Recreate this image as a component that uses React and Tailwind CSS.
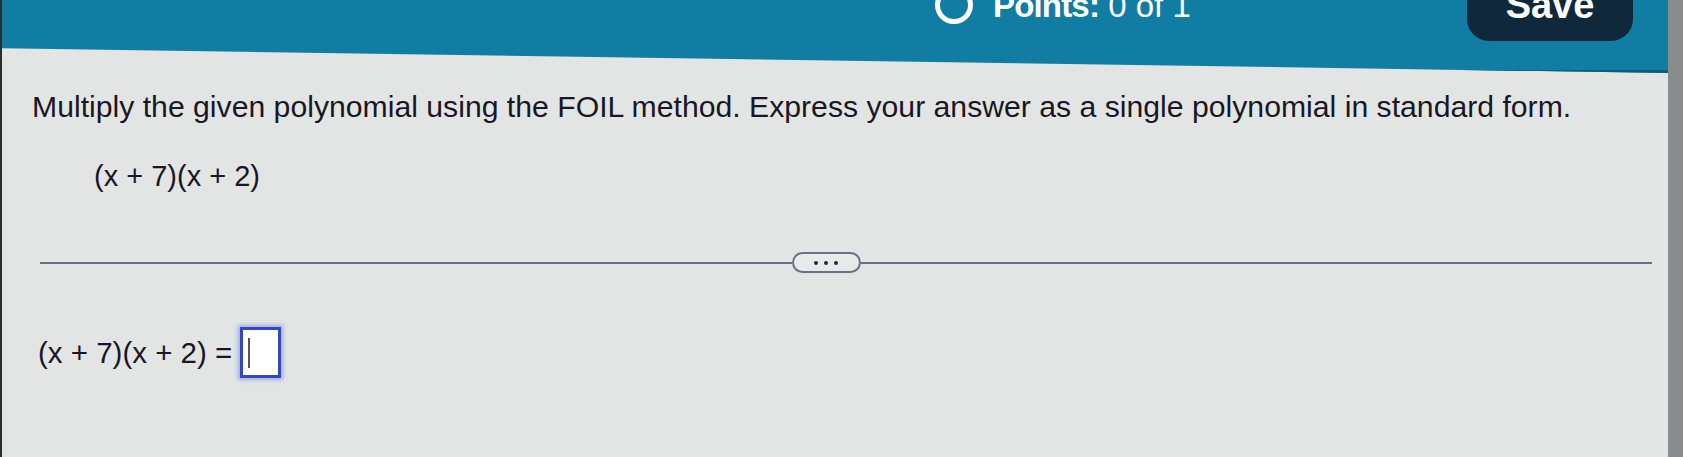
import React from "react";

export default function App() {
  const font = { fontFamily: '"Liberation Sans", Arial, sans-serif' };
  return (
    <div className="w-[1683px] h-[457px] overflow-hidden bg-[#3a3c3e] flex" style={font}>
      <div className="w-[2px] bg-[#2a2c2e]" />
      <div className="flex-1 flex flex-col bg-[#e3e5e4] relative">
        {/* header */}
        <div
          className="h-[73px] bg-[#127da3] border-b-[3px] border-[#0c5f7e] relative flex justify-end"
          style={{ clipPath: "polygon(0 0, 100% 0, 100% 100%, 0 66%)" }}
        >
          <div className="absolute left-[933px] top-[-14px] flex items-center gap-[20px] text-white text-[33px] leading-none">
            <div className="w-[38px] h-[38px] rounded-full border-[5px] border-white" />
            <div>
              <span className="font-bold tracking-tight">Points:</span> 0 of 1
            </div>
          </div>
          <div className="mr-[35px] w-[166px] h-[41px] bg-[#10283c] rounded-b-[22px] flex justify-center overflow-hidden">
            <span className="text-white font-bold text-[38px] leading-none mt-[-14px]">Save</span>
          </div>
        </div>
        {/* content */}
        <div className="pl-[30px] pr-[10px] pt-[17px] text-[#1a1724]">
          <div className="text-[30.2px] leading-[34px] whitespace-nowrap">
            Multiply the given polynomial using the FOIL method. Express your answer as a single polynomial in standard form.
          </div>
          <div className="ml-[62px] mt-[34px] text-[29px] leading-[36px]">(x + 7)(x + 2)</div>
        </div>
        <div className="mt-[58px] ml-[38px] mr-[16px] flex items-center">
          <div className="flex-[0.95] h-[2px] bg-[#6e6d86]" />
          <div className="w-[69px] h-[21px] rounded-full border-[2px] border-[#6e6d86] bg-[#e8eaea] flex items-center justify-center gap-[6px]">
            <div className="w-[4px] h-[4px] rounded-full bg-[#2a2840]" />
            <div className="w-[4px] h-[4px] rounded-full bg-[#2a2840]" />
            <div className="w-[4px] h-[4px] rounded-full bg-[#2a2840]" />
          </div>
          <div className="flex-1 h-[2px] bg-[#6e6d86]" />
        </div>
        <div className="ml-[36px] mt-[54px] flex items-center gap-[8px] text-[#1a1724]">
          <span className="text-[29.5px] leading-[34px]">(x + 7)(x + 2) =</span>
          <div className="w-[41px] h-[51px] border-[3px] border-[#3447c2] bg-white shadow-[0_0_4px_2px_rgba(90,120,230,0.5)] flex items-center pl-[5px]">
            <div className="w-[2px] h-[30px] bg-[#555]" />
          </div>
        </div>
      </div>
      <div className="w-[15px] bg-[#8a8c8d]" />
    </div>
  );
}
